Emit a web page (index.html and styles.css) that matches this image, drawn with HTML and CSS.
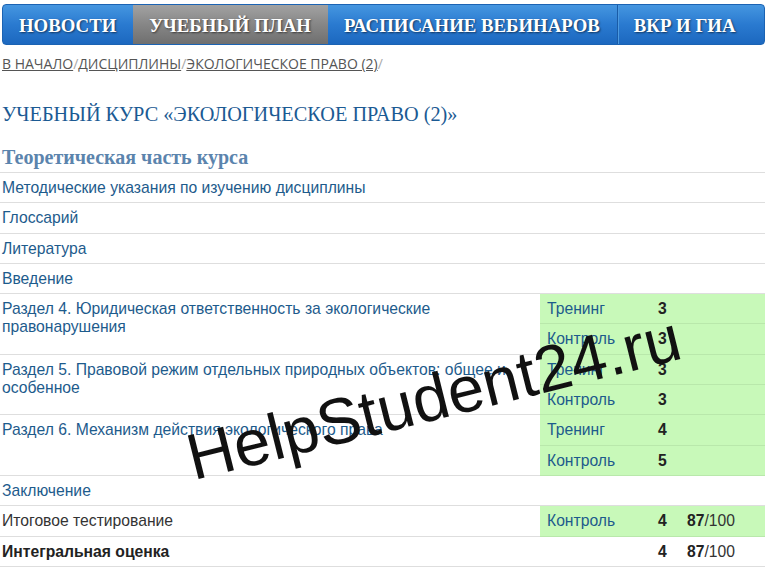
FILE: index.html
```html
<!DOCTYPE html>
<html lang="ru">
<head>
<meta charset="utf-8">
<title>Учебный курс</title>
<link rel="stylesheet" href="styles.css">
</head>
<body>
<div class="page">
  <nav class="menu">
    <a class="menu-item" href="#">НОВОСТИ</a>
    <a class="menu-item active" href="#">УЧЕБНЫЙ ПЛАН</a>
    <a class="menu-item" href="#">РАСПИСАНИЕ ВЕБИНАРОВ</a>
    <a class="menu-item last" href="#">ВКР И ГИА</a>
  </nav>
  <div class="crumbs"><a href="#">В НАЧАЛО</a><span class="sep">/</span><a href="#">ДИСЦИПЛИНЫ</a><span class="sep">/</span><a href="#">ЭКОЛОГИЧЕСКОЕ ПРАВО (2)</a><span class="sep">/</span></div>
  <h1 class="title">УЧЕБНЫЙ КУРС «ЭКОЛОГИЧЕСКОЕ ПРАВО (2)»</h1>
  <h2 class="section">Теоретическая часть курса</h2>
  <table class="plan">
    <colgroup><col class="c1"><col class="c2"><col class="c3"><col class="c4"></colgroup>
    <tr><td class="name"><a href="#">Методические указания по изучению дисциплины</a></td><td></td><td></td><td></td></tr>
    <tr><td class="name"><a href="#">Глоссарий</a></td><td></td><td></td><td></td></tr>
    <tr><td class="name"><a href="#">Литература</a></td><td></td><td></td><td></td></tr>
    <tr><td class="name"><a href="#">Введение</a></td><td></td><td></td><td></td></tr>
    <tr><td class="name top" rowspan="2"><a href="#">Раздел 4. Юридическая ответственность за экологические правонарушения</a></td><td class="g kind"><a href="#">Тренинг</a></td><td class="g num">3</td><td class="g"></td></tr>
    <tr><td class="g kind sub"><a href="#">Контроль</a></td><td class="g num sub">3</td><td class="g sub"></td></tr>
    <tr><td class="name top" rowspan="2"><a href="#">Раздел 5. Правовой режим отдельных природных объектов: общее и особенное</a></td><td class="g kind"><a href="#">Тренинг</a></td><td class="g num">3</td><td class="g"></td></tr>
    <tr><td class="g kind sub"><a href="#">Контроль</a></td><td class="g num sub">3</td><td class="g sub"></td></tr>
    <tr><td class="name top" rowspan="2"><a href="#">Раздел 6. Механизм действия экологического права</a></td><td class="g kind"><a href="#">Тренинг</a></td><td class="g num">4</td><td class="g"></td></tr>
    <tr><td class="g kind sub"><a href="#">Контроль</a></td><td class="g num sub">5</td><td class="g sub"></td></tr>
    <tr><td class="name"><a href="#">Заключение</a></td><td></td><td></td><td></td></tr>
    <tr><td class="name plain">Итоговое тестирование</td><td class="g kind"><a href="#">Контроль</a></td><td class="g num">4</td><td class="g score"><b>87</b>/100</td></tr>
    <tr><td class="name plain strong">Интегральная оценка</td><td></td><td class="num">4</td><td class="score"><b>87</b>/100</td></tr>
  </table>
  <div class="watermark">HelpStudent24.ru</div>
</div>
</body>
</html>
```
FILE: styles.css
```css
html, body {
  margin: 0;
  padding: 0;
  background: #fff;
}
.page {
  position: relative;
  width: 777px;
  height: 574px;
  overflow: hidden;
  font-family: "Liberation Sans", Arial, sans-serif;
}
.menu {
  display: flex;
  margin: 4px 0 0 2px;
  width: 761px;
  height: 39px;
  border: 1px solid #1b63b3;
  border-radius: 4px;
  overflow: hidden;
  background: linear-gradient(#4596e0, #2a7ad0 50%, #1c68bf);
}
.menu-item {
  display: flex;
  align-items: center;
  flex-shrink: 0;
  white-space: nowrap;
  padding: 3px 17px 0 16px;
  font-family: "Liberation Serif", "Times New Roman", serif;
  font-weight: bold;
  font-size: 18.8px;
  color: #fff;
  text-decoration: none;
  text-shadow: 1px 1px 2px rgba(0,0,0,0.55);
}
.menu-item.active {
  background: linear-gradient(#a2a2a2, #868686 50%, #6f6f6f);
}
.menu-item.last {
  border-left: 1px solid #1a5ba6;
  box-shadow: inset 1px 0 0 #4c9ae0;
}
.crumbs {
  margin: 9px 0 0 2px;
  font-family: "Open Sans", sans-serif;
  font-size: 14px;
  line-height: 20px;
  color: #5a5a5a;
}
.crumbs a {
  color: #555;
  text-decoration: underline;
}
.crumbs .sep {
  color: #aaa;
}
.title {
  margin: 28px 0 0 2px;
  font-family: "Liberation Serif", "Times New Roman", serif;
  font-weight: normal;
  font-size: 20.3px;
  line-height: 24px;
  color: #1b5a93;
}
.section {
  margin: 19px 0 0 2px;
  font-family: "Liberation Serif", "Times New Roman", serif;
  font-weight: bold;
  font-size: 20px;
  line-height: 24px;
  color: #5b84ad;
}
.plan {
  margin-top: 3px;
  width: 765px;
  border-collapse: collapse;
  table-layout: fixed;
  font-size: 15.7px;
  line-height: 18.3px;
}
.c1 { width: 540px; }
.c2 { width: 112px; }
.c3 { width: 33px; }
.c4 { width: 80px; }
.plan td {
  border-top: 1px solid #dedede;
  border-bottom: 1px solid #dedede;
  padding: 6px 2px 5px 2px;
  height: 18px;
  vertical-align: middle;
  color: #333;
}
.plan td.name {
  padding-right: 6px;
}
.plan td.top {
  vertical-align: top;
}
.plan a {
  color: #1d5b8c;
  text-decoration: none;
}
.plan td.g {
  background: #c8f9b9;
  border-color: #b9e8ab;
}
.plan td.kind {
  padding-left: 7px;
}
.plan td.num {
  font-weight: bold;
  color: #222;
  padding-left: 6px;
}
.plan td.score {
  color: #333;
}
.plan td.score b {
  color: #222;
}
.plan td.strong {
  font-weight: bold;
  color: #222;
}
.watermark {
  position: absolute;
  left: 196px;
  top: 425px;
  font-family: "Liberation Sans", Arial, sans-serif;
  font-size: 65px;
  line-height: 65px;
  color: #111;
  white-space: nowrap;
  transform: rotate(-14deg);
  transform-origin: 0 100%;
  pointer-events: none;
}
```
